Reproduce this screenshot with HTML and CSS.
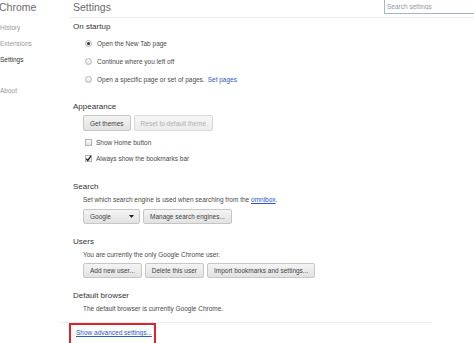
FILE: index.html
```html
<!DOCTYPE html>
<html lang="en">
<head>
    <meta charset="UTF-8">
    <meta name="viewport" content="width=device-width, initial-scale=1.0">
    <title>Settings</title>
    <link rel="stylesheet" href="styles.css">
</head>
<body>

<div class="page">

    <nav class="sidebar">
        <div class="brand">Chrome</div>
        <ul class="nav">
            <li>History</li>
            <li>Extensions</li>
            <li class="current">Settings</li>
            <li class="about">About</li>
        </ul>
    </nav>

    <main class="main">

        <header class="top">
            <h1 class="titulo">Settings</h1>
            <input class="search" type="text" placeholder="Search settings">
        </header>

        <!-- on startup -->
        <section class="bloque startup">
            <h2 class="encabezado">On startup</h2>
            <div class="opcion"><span class="radio on"></span>Open the New Tab page</div>
            <div class="opcion"><span class="radio"></span>Continue where you left off</div>
            <div class="opcion"><span class="radio"></span>Open a specific page or set of pages. <a class="enlace" href="#">Set pages</a></div>
        </section>

        <!-- appearance -->
        <section class="bloque appearance">
            <h2 class="encabezado">Appearance</h2>
            <div class="botones">
                <button class="btn">Get themes</button>
                <button class="btn" disabled>Reset to default theme</button>
            </div>
            <div class="check-row first"><span class="check"></span>Show Home button</div>
            <div class="check-row">
                <span class="check">
                    <svg width="7" height="7" viewBox="0 0 7 7"><polyline points="1.2,3.6 2.8,5.4 6,0.8" fill="none" stroke="#222" stroke-width="1.3"/></svg>
                </span>Always show the bookmarks bar
            </div>
        </section>

        <!-- search -->
        <section class="bloque search-sec">
            <h2 class="encabezado">Search</h2>
            <p class="texto">Set which search engine is used when searching from the <a class="enlace subrayado" href="#">omnibox</a>.</p>
            <div class="botones">
                <span class="btn select">Google
                    <svg width="5" height="3" viewBox="0 0 5 3"><polygon points="0,0 5,0 2.5,3" fill="#222"/></svg>
                </span>
                <button class="btn">Manage search engines...</button>
            </div>
        </section>

        <!-- users -->
        <section class="bloque users">
            <h2 class="encabezado">Users</h2>
            <p class="texto">You are currently the only Google Chrome user.</p>
            <div class="botones">
                <button class="btn">Add new user...</button>
                <button class="btn">Delete this user</button>
                <button class="btn">Import bookmarks and settings...</button>
            </div>
        </section>

        <!-- default browser -->
        <section class="bloque default-sec">
            <h2 class="encabezado">Default browser</h2>
            <p class="texto">The default browser is currently Google Chrome.</p>
        </section>

        <footer class="pie">
            <div class="marcado">
                <a class="enlace subrayado" href="#">Show advanced settings...</a>
            </div>
        </footer>

    </main>
</div>

</body>
</html>
```

FILE: styles.css
```css
* {
    box-sizing: border-box;
}
html, body {
    margin: 0;
    padding: 0;
    background: #fff;
    overflow: hidden;
}
body {
    font-family: "Liberation Sans", Arial, sans-serif;
    font-size: 6.5px;
    color: #4a4a4a;
    width: 474px;
    height: 343px;
}
.page {
    display: flex;
}

/* sidebar */
.sidebar {
    width: 73px;
    flex-shrink: 0;
}
.brand {
    font-size: 10.5px;
    line-height: 14px;
    height: 14px;
    color: #6a6a6a;
    margin-left: -1px;
}
.nav {
    list-style: none;
    margin: 6px 0 0 0;
    padding: 0;
}
.nav li {
    line-height: 16px;
    height: 16px;
    color: #9a9a9a;
}
.nav .current {
    color: #333;
}
.nav .about {
    margin-top: 15px;
}

/* main column */
.main {
    flex: 1;
    min-width: 0;
}
.top {
    display: flex;
    align-items: flex-start;
    height: 18px;
    border-bottom: 1px solid #ececec;
    margin-left: -3px;
    padding-left: 3px;
}
.titulo {
    margin: 0;
    font-size: 10.5px;
    font-weight: normal;
    line-height: 14px;
    color: #6a6a6a;
}
.search {
    margin: -1px -4px 0 auto;
    width: 94px;
    height: 15px;
    border: 1px solid #9fb6dc;
    padding: 0 2px;
    font-family: inherit;
    font-size: 6.5px;
    color: #444;
    outline: none;
}
.search::placeholder {
    color: #999;
}

/* sections */
.bloque {
    margin: 0;
}
.encabezado {
    margin: 0;
    font-size: 8px;
    font-weight: normal;
    line-height: 14px;
    height: 14px;
    padding-top: 1px;
    color: #333;
}
.startup .encabezado {
    padding-top: 2px;
    margin-bottom: 2px;
}
.appearance { margin-top: 10px; }
.search-sec { margin-top: 13px; }
.users { margin-top: 10px; }
.default-sec { margin-top: 10px; }

.opcion {
    display: flex;
    align-items: center;
    height: 18px;
    padding-left: 12px;
}
.opcion + .opcion {
    height: 18.5px;
}
.radio {
    width: 7px;
    height: 7px;
    border-radius: 50%;
    border: 1px solid #b4b4b4;
    background: linear-gradient(#fdfdfd, #e4e4e4);
    margin-right: 5px;
    display: flex;
    align-items: center;
    justify-content: center;
}
.radio.on::after {
    content: "";
    width: 3px;
    height: 3px;
    border-radius: 50%;
    background: #333;
}
.enlace {
    color: #2e58c6;
    text-decoration: none;
    margin-left: 3px;
}
.subrayado {
    text-decoration: underline;
    margin-left: 0;
}

.texto {
    margin: 0;
    padding-left: 10px;
    line-height: 14px;
    height: 14px;
}
.botones {
    display: flex;
    gap: 3px;
    padding-left: 10px;
    margin-top: 2px;
}
.users .botones { margin-top: 1px; }
.btn {
    height: 16px;
    padding: 0 6px;
    border: 1px solid #c6c6c6;
    border-radius: 2px;
    background: linear-gradient(#f4f4f4, #e2e2e2);
    font-family: inherit;
    font-size: 6.5px;
    color: #444;
    display: flex;
    align-items: center;
}
.search-sec .btn,
.users .btn {
    height: 15px;
}
.btn:disabled {
    color: #b0b0b0;
    background: linear-gradient(#f6f6f6, #ececec);
    border-color: #d8d8d8;
}
.select {
    width: 57px;
    justify-content: space-between;
    padding-right: 5px;
}

.check-row {
    display: flex;
    align-items: center;
    height: 16px;
    padding-left: 12px;
}
.check-row.first { margin-top: 3px; }
.check {
    width: 7px;
    height: 7px;
    border: 1px solid #b4b4b4;
    background: linear-gradient(#fdfdfd, #e4e4e4);
    margin-right: 4px;
    display: flex;
    align-items: center;
    justify-content: center;
    overflow: visible;
}
.check svg {
    flex-shrink: 0;
}

/* footer */
.pie {
    margin-top: 6px;
    margin-left: -13px;
    width: 372px;
    border-top: 1px solid #ececec;
}
.marcado {
    margin-left: 9px;
    width: 87px;
    height: 24px;
    border: 2px solid #e0232b;
    padding: 1px 0 0 5px;
    line-height: 14px;
}
```
